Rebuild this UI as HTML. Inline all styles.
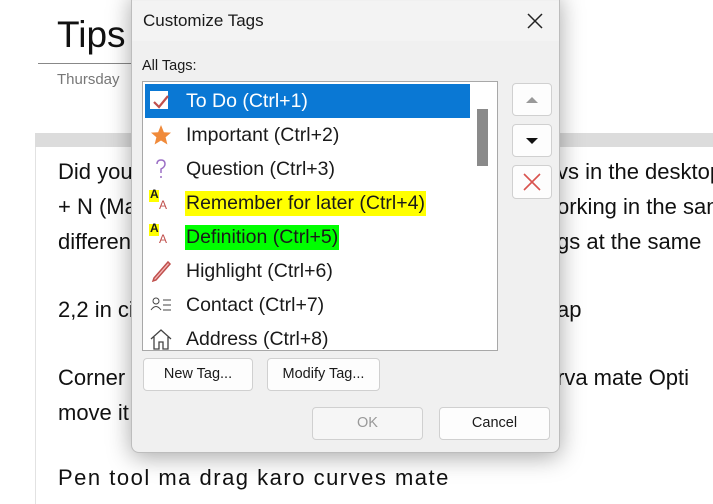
<!DOCTYPE html>
<html><head><style>
body{margin:0;width:713px;height:504px;position:relative;overflow:hidden;background:#fff;font-family:"Liberation Sans",sans-serif;}
.a{position:absolute;}
.bt{position:absolute;background:#fdfdfd;border:1px solid #d0d0d0;border-radius:4px;font-size:14.5px;color:#1a1a1a;text-align:center;box-sizing:border-box;}
.row{position:absolute;left:2px;height:34px;width:325px;font-size:19.5px;color:#1a1a1a;}
.row span.t{position:absolute;left:40px;top:5px;padding:0 1px;line-height:25px;}
.ic{position:absolute;left:4px;top:5px;width:24px;height:24px;}
.bg{position:absolute;font-size:22px;color:#111;white-space:nowrap;}
</style></head><body>
<div class="a" style="left:57px;top:14px;font-size:37px;color:#111">Tips</div>
<div class="a" style="left:38px;top:63px;width:100px;height:1px;background:#888"></div>
<div class="a" style="left:57px;top:71px;font-size:15px;color:#777">Thursday</div>
<div class="a" style="left:35px;top:133px;width:678px;height:14px;background:#dcdcdc"></div>
<div class="a" style="left:35px;top:147px;width:1px;height:357px;background:#e2e2e2"></div>
<div class="bg" style="left:58px;top:159px">Did you</div>
<div class="bg" style="left:58px;top:194px">+ N (Ma</div>
<div class="bg" style="left:58px;top:229px">different</div>
<div class="bg" style="left:58px;top:297px">2,2 in ci</div>
<div class="bg" style="left:58px;top:365px">Corner r</div>
<div class="bg" style="left:58px;top:400px">move it</div>
<div class="bg" style="left:58px;top:465px;letter-spacing:1.5px">Pen tool ma drag karo curves mate</div>
<div class="bg" style="left:557px;top:159px">vs in the desktop</div>
<div class="bg" style="left:557px;top:194px">orking in the same</div>
<div class="bg" style="left:557px;top:229px">gs at the same</div>
<div class="bg" style="left:557px;top:297px">ap</div>
<div class="bg" style="left:557px;top:365px">rva mate Opti</div>

<div class="a" style="left:131px;top:-8px;width:427px;height:459px;background:#f0f0f0;border:1px solid #bdbdbd;border-radius:8px;box-shadow:0 4px 24px rgba(0,0,0,.35);overflow:hidden">
 <div class="a" style="left:0;top:8px;width:427px;height:40px;background:#f3f3f3"></div>
 <div class="a" style="left:11px;top:18px;font-size:17px;color:#1a1a1a">Customize Tags</div>
 <svg class="a" style="left:395px;top:20px" width="16" height="16"><path d="M1 1L15 15M15 1L1 15" stroke="#222" stroke-width="1.5"/></svg>
 <div class="a" style="left:10px;top:65px;font-size:14.5px;color:#1a1a1a">All Tags:</div>
 <div class="a" style="left:10px;top:88px;width:354px;height:268px;background:#fff;border:1px solid #a8a8a8;overflow:hidden">
  <div class="a" style="left:334px;top:27px;width:11px;height:57px;background:#8a8a8a"></div>
  <div class="row" style="top:2px;background:#0a78d4;color:#fff"><div class="ic" style="background:#fff;width:18px;height:18px;top:7px;left:5px"></div><svg class="ic" viewBox="0 0 24 24" style="top:5px"><path d="M5 13L10 18L19 7" stroke="#c0504d" stroke-width="2.2" fill="none"/></svg><span class="t">To Do (Ctrl+1)</span></div>
  <div class="row" style="top:36px"><svg class="ic" viewBox="0 0 24 24"><path d="M12 2L14.9 9.2L22 9.6L16.6 14.2L18.4 21.5L12 17.5L5.6 21.5L7.4 14.2L2 9.6L9.1 9.2Z" fill="#f08a3a"/></svg><span class="t">Important (Ctrl+2)</span></div>
  <div class="row" style="top:70px"><svg class="ic" viewBox="0 0 24 24"><path d="M8 7Q8 3 12 3Q16 3 16 7Q16 10 12 12L12 16" stroke="#9b6fc5" stroke-width="1.5" fill="none"/><circle cx="12" cy="20" r="1" fill="#9b6fc5"/></svg><span class="t">Question (Ctrl+3)</span></div>
  <div class="row" style="top:104px"><div class="ic" style="left:4px;top:4px;width:10px;height:12px;background:#ff0"></div><div class="a" style="left:5px;top:1px;font-size:12px;font-weight:bold">A</div><div class="a" style="left:14px;top:12px;font-size:12px;color:#c0504d">A</div><span class="t" style="background:#ff0">Remember for later (Ctrl+4)</span></div>
  <div class="row" style="top:138px"><div class="ic" style="left:4px;top:4px;width:10px;height:12px;background:#ff0"></div><div class="a" style="left:5px;top:1px;font-size:12px;font-weight:bold">A</div><div class="a" style="left:14px;top:12px;font-size:12px;color:#c0504d">A</div><span class="t" style="background:#0f0">Definition (Ctrl+5)</span></div>
  <div class="row" style="top:172px"><svg class="ic" viewBox="0 0 24 24"><path d="M19 3L5 19L4 22L7 21L21 5Z" stroke="#c0504d" stroke-width="1.5" fill="#f4b8b8"/></svg><span class="t">Highlight (Ctrl+6)</span></div>
  <div class="row" style="top:206px"><svg class="ic" viewBox="0 0 24 24"><circle cx="7" cy="8" r="3" stroke="#444" fill="none"/><path d="M2 17Q7 10 12 17M14 7H22M14 12H22M14 17H22" stroke="#444" fill="none"/></svg><span class="t">Contact (Ctrl+7)</span></div>
  <div class="row" style="top:240px"><svg class="ic" viewBox="0 0 24 24"><path d="M2 12L12 3L22 12M5 10V22H10V15H14V22H19V10" stroke="#444" stroke-width="1.3" fill="none"/></svg><span class="t">Address (Ctrl+8)</span></div>
 </div>
 <div class="bt" style="left:380px;top:90px;width:40px;height:33px"><svg width="12" height="8" style="margin-top:12px"><path d="M0 7L6 1L12 7Z" fill="#999"/></svg></div>
 <div class="bt" style="left:380px;top:131px;width:40px;height:33px"><svg width="12" height="8" style="margin-top:12px"><path d="M0 1L6 7L12 1Z" fill="#111"/></svg></div>
 <div class="bt" style="left:380px;top:172px;width:40px;height:34px"><svg width="20" height="20" style="margin-top:6px"><path d="M2 2L18 18M18 2L2 18" stroke="#d9534f" stroke-width="1.6"/></svg></div>
 <div class="bt" style="left:11px;top:365px;width:110px;height:33px;line-height:31px">New Tag...</div>
 <div class="bt" style="left:135px;top:365px;width:113px;height:33px;line-height:31px">Modify Tag...</div>
 <div class="bt" style="left:180px;top:414px;width:111px;height:33px;line-height:31px;color:#999;background:#f6f6f6">OK</div>
 <div class="bt" style="left:307px;top:414px;width:111px;height:33px;line-height:31px">Cancel</div>
</div>
</body></html>
